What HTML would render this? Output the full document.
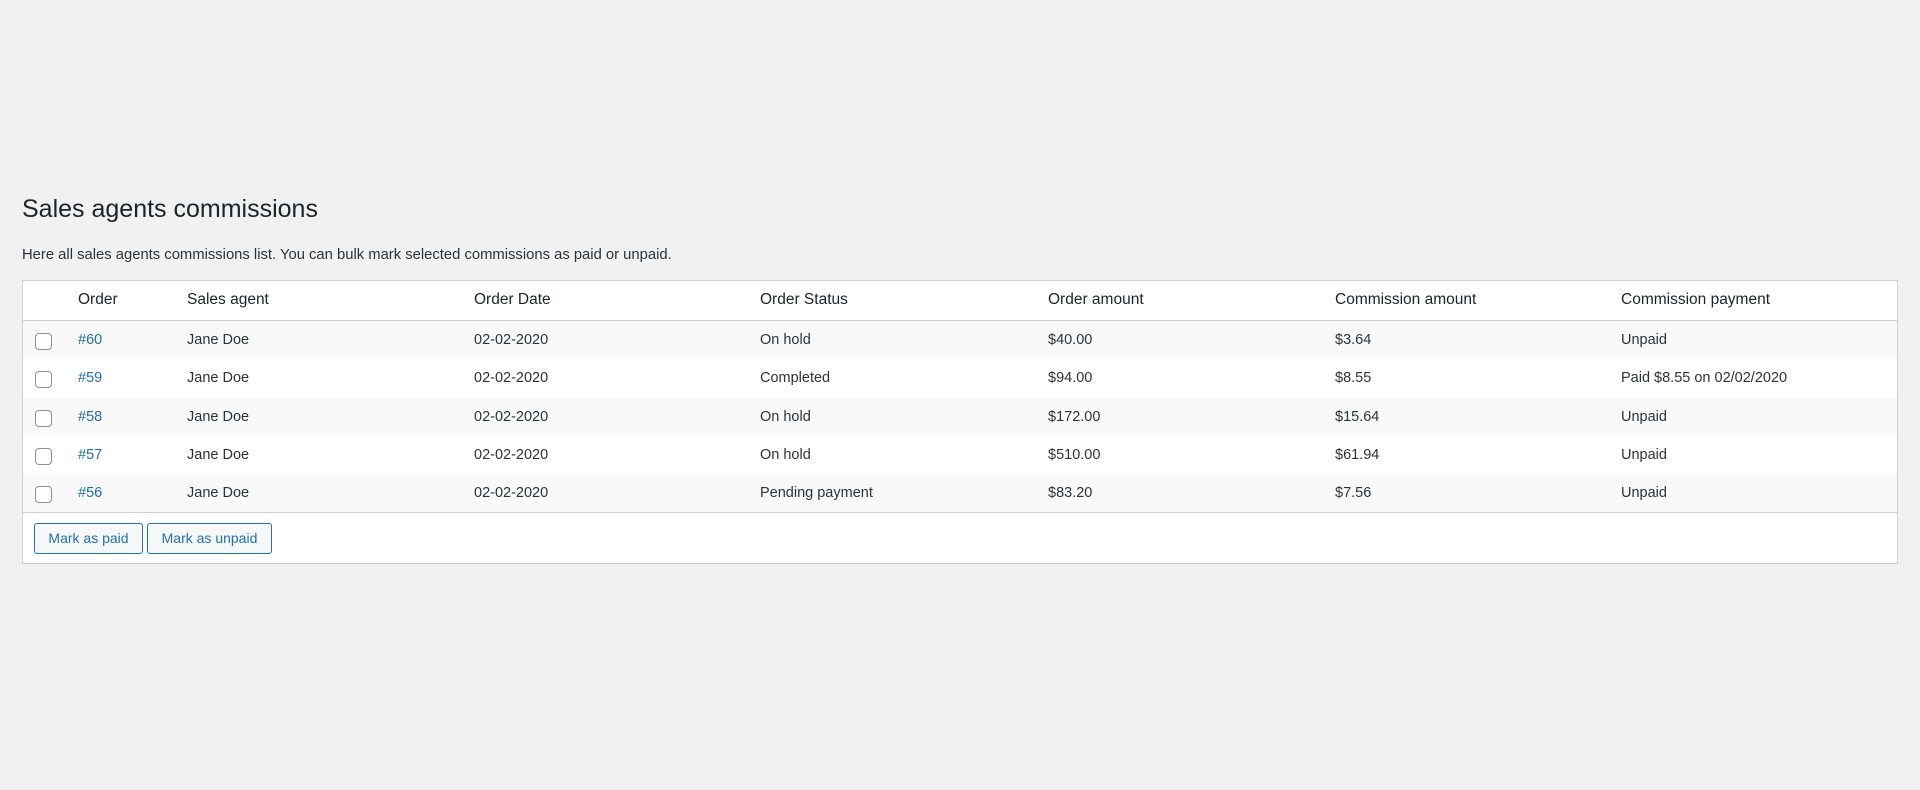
<!DOCTYPE html>
<html><head><meta charset="utf-8"><style>
body{margin:0;background:#f1f1f1;font-family:"Liberation Sans",Arial,sans-serif;color:#2c3338;width:1920px;height:790px;position:relative;overflow:hidden}
h1{position:absolute;left:22px;top:195px;margin:0;font-size:25px;font-weight:400;color:#1d2327}
.desc{position:absolute;left:22px;top:247px;font-size:14.8px;margin:0}
.tbl{position:absolute;left:22px;top:280px;width:1874px;height:282px;background:#fff;border:1px solid #ccd0d4}
.row{position:absolute;left:0;width:1874px;height:38.3px;font-size:14.5px}
.row span{position:absolute;top:0;line-height:38px}
.hdr{height:39px;border-bottom:1px solid #ccd0d4;font-size:15.5px;color:#1d2327}
.alt{background:#f9f9f9}
.cb{position:absolute;left:12px;top:12px;width:15px;height:15px;border:1px solid #8c8f94;border-radius:4px;background:#fff}
a{color:#1e6fa6;text-decoration:none}
.foot{position:absolute;top:231px;left:0;width:1874px;border-top:1px solid #ccd0d4}
.btn{position:absolute;top:10px;height:29px;border:1px solid #2271b1;border-radius:3px;background:#f6f7f7;color:#2271b1;font-size:14px;line-height:29px;text-align:center}
</style></head><body>
<h1>Sales agents commissions</h1>
<p class="desc">Here all sales agents commissions list. You can bulk mark selected commissions as paid or unpaid.</p>
<div class="tbl">
<div class="row hdr" style="top:0"><span style="left:55px">Order</span><span style="left:164px">Sales agent</span><span style="left:451px">Order Date</span><span style="left:737px">Order Status</span><span style="left:1025px">Order amount</span><span style="left:1312px">Commission amount</span><span style="left:1598px">Commission payment</span></div>
<div class="row alt" style="top:40px"><i class="cb"></i><span style="left:55px"><a>#60</a></span><span style="left:164px">Jane Doe</span><span style="left:451px">02-02-2020</span><span style="left:737px">On hold</span><span style="left:1025px">$40.00</span><span style="left:1312px">$3.64</span><span style="left:1598px">Unpaid</span></div>
<div class="row" style="top:78.3px"><i class="cb"></i><span style="left:55px"><a>#59</a></span><span style="left:164px">Jane Doe</span><span style="left:451px">02-02-2020</span><span style="left:737px">Completed</span><span style="left:1025px">$94.00</span><span style="left:1312px">$8.55</span><span style="left:1598px">Paid $8.55 on 02/02/2020</span></div>
<div class="row alt" style="top:116.6px"><i class="cb"></i><span style="left:55px"><a>#58</a></span><span style="left:164px">Jane Doe</span><span style="left:451px">02-02-2020</span><span style="left:737px">On hold</span><span style="left:1025px">$172.00</span><span style="left:1312px">$15.64</span><span style="left:1598px">Unpaid</span></div>
<div class="row" style="top:154.9px"><i class="cb"></i><span style="left:55px"><a>#57</a></span><span style="left:164px">Jane Doe</span><span style="left:451px">02-02-2020</span><span style="left:737px">On hold</span><span style="left:1025px">$510.00</span><span style="left:1312px">$61.94</span><span style="left:1598px">Unpaid</span></div>
<div class="row alt" style="top:193.2px"><i class="cb"></i><span style="left:55px"><a>#56</a></span><span style="left:164px">Jane Doe</span><span style="left:451px">02-02-2020</span><span style="left:737px">Pending payment</span><span style="left:1025px">$83.20</span><span style="left:1312px">$7.56</span><span style="left:1598px">Unpaid</span></div>
<div class="foot"><div class="btn" style="left:11px;width:107px">Mark as paid</div><div class="btn" style="left:124px;width:123px">Mark as unpaid</div></div>
</div>
</body></html>
